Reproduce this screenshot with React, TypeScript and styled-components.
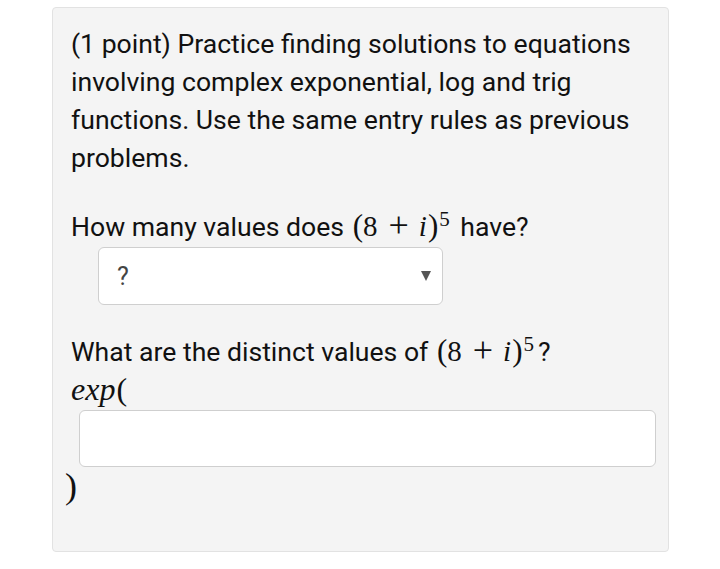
import React from "react";
import { styled, createGlobalStyle } from "styled-components";

const GlobalStyle = createGlobalStyle`
  html, body {
    margin: 0;
    padding: 0;
    background: #ffffff;
  }
  body {
    font-family: Roboto, "Liberation Sans", Arial, sans-serif;
    color: #111;
  }
`;

const Power = () => (
  <Math>
    <Paren>(</Paren>8<Op>+</Op>
    <MathVar>i</MathVar>
    <Paren>)</Paren>
    <Sup>5</Sup>
  </Math>
);

const App = () => {
  return (
    <>
      <GlobalStyle />
      <Page>
        <Card>
          <Intro>
            (1 point) Practice finding solutions to equations involving complex
            exponential, log and trig functions. Use the same entry rules as
            previous problems.
          </Intro>

          <Question $gap={30}>
            How many values does <Power /> have?
          </Question>
          <SelectBox>
            <SelectValue>?</SelectValue>
            <SelectArrow />
          </SelectBox>

          <Question $gap={27}>
            What are the distinct values of <Power />?
          </Question>
          <MathLine>
            <MathVar>exp</MathVar>(
          </MathLine>
          <AnswerInput type="text" />
          <CloseParen>)</CloseParen>
        </Card>
      </Page>
    </>
  );
};

const Page = styled.div`
  padding: 7px 52px 18px 52px;
`;

const Card = styled.div`
  box-sizing: border-box;
  width: 617px;
  height: 545px;
  background: #f4f4f4;
  border: 1px solid #e2e2e2;
  border-radius: 4px;
  padding: 17px 18px 0 18px;
`;

const Intro = styled.p`
  margin: 0;
  font-size: 26.6px;
  line-height: 38px;
`;

const Question = styled.p<{ $gap: number }>`
  margin: ${(p) => p.$gap}px 0 0 0;
  font-size: 26.6px;
  line-height: 38px;
`;

const Math = styled.span`
  font-family: "Liberation Serif", "DejaVu Serif", serif;
  font-size: 29px;
  white-space: nowrap;
  margin-left: 2px;
`;

const Paren = styled.span`
  font-size: 31px;
`;

const Op = styled.span`
  display: inline-block;
  font-size: 36px;
  font-weight: 300;
  line-height: 0;
  margin: 0 10px 0 11px;
  transform: translateY(1px);
`;

const MathVar = styled.i`
  font-family: "Liberation Serif", "DejaVu Serif", serif;
  font-style: italic;
  padding-right: 1px;
`;

const Sup = styled.sup`
  font-size: 21px;
  vertical-align: 10px;
  line-height: 0;
  margin-left: 1px;
  margin-right: 4px;
`;

const SelectBox = styled.div`
  box-sizing: border-box;
  margin: 1px 0 0 27px;
  width: 345px;
  height: 58px;
  background: #ffffff;
  border: 1.5px solid #cfcfcf;
  border-radius: 6px;
  display: flex;
  align-items: center;
  justify-content: space-between;
  padding: 0 11px 0 18px;
`;

const SelectValue = styled.span`
  font-size: 25px;
  color: #444;
`;

const SelectArrow = styled.span`
  width: 0;
  height: 0;
  border-left: 5px solid transparent;
  border-right: 5px solid transparent;
  border-top: 10px solid #555;
`;

const MathLine = styled.div`
  font-family: "Liberation Serif", "DejaVu Serif", serif;
  font-size: 32px;
  line-height: 36px;
`;

const AnswerInput = styled.input`
  box-sizing: border-box;
  display: block;
  margin: 3px 0 0 8px;
  width: 577px;
  height: 57px;
  background: #ffffff;
  border: 1.5px solid #cfcfcf;
  border-radius: 6px;
  outline: none;
  font-size: 22px;
  padding: 0 12px;
`;

const CloseParen = styled.div`
  font-family: "Liberation Serif", "DejaVu Serif", serif;
  font-size: 36px;
  line-height: 38px;
  margin-left: -6px;
`;

export default App;
